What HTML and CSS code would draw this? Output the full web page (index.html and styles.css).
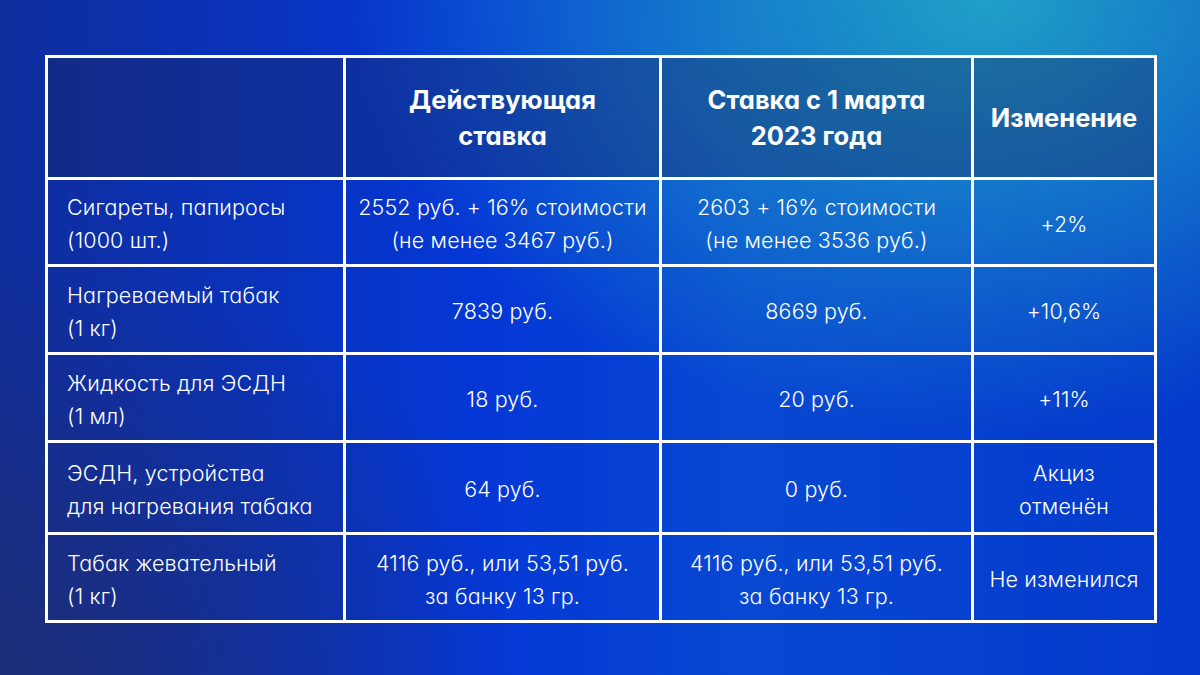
FILE: index.html
```html
<!DOCTYPE html>
<html lang="ru">
<head>
<meta charset="utf-8">
<link rel="stylesheet" href="styles.css">
</head>
<body>
<div class="page">
  <table class="rates">
    <colgroup>
      <col class="c1"><col class="c2"><col class="c3"><col class="c4">
    </colgroup>
    <thead>
      <tr class="head">
        <th class="first"></th>
        <th>Действующая<br>ставка</th>
        <th>Ставка с 1 марта<br>2023 года</th>
        <th>Изменение</th>
      </tr>
    </thead>
    <tbody>
      <tr class="r1">
        <td class="first">Сигареты, папиросы<br>(1000 шт.)</td>
        <td>2552 руб. + 16% стоимости<br>(не менее 3467 руб.)</td>
        <td>2603 + 16% стоимости<br>(не менее 3536 руб.)</td>
        <td>+2%</td>
      </tr>
      <tr class="r2">
        <td class="first">Нагреваемый табак<br>(1 кг)</td>
        <td>7839 руб.</td>
        <td>8669 руб.</td>
        <td>+10,6%</td>
      </tr>
      <tr class="r3">
        <td class="first">Жидкость для ЭСДН<br>(1 мл)</td>
        <td>18 руб.</td>
        <td>20 руб.</td>
        <td>+11%</td>
      </tr>
      <tr class="r4">
        <td class="first">ЭСДН, устройства<br>для нагревания табака</td>
        <td>64 руб.</td>
        <td>0 руб.</td>
        <td>Акциз<br>отменён</td>
      </tr>
      <tr class="r5">
        <td class="first">Табак жевательный<br>(1 кг)</td>
        <td>4116 руб., или 53,51 руб.<br>за банку 13 гр.</td>
        <td>4116 руб., или 53,51 руб.<br>за банку 13 гр.</td>
        <td>Не изменился</td>
      </tr>
    </tbody>
  </table>
</div>
</body>
</html>
```

FILE: styles.css
```css
html, body {
  margin: 0;
  padding: 0;
}
body {
  width: 1200px;
  height: 675px;
  overflow: hidden;
  font-family: Inter, "Noto Sans", sans-serif;
  font-feature-settings: "cv11";
  color: #ffffff;
  background:
    radial-gradient(ellipse 640px 430px at 82% 0%, rgba(32, 165, 198, 0.95), rgba(32, 165, 198, 0) 100%),
    radial-gradient(ellipse 520px 430px at 0% 100%, rgba(30, 45, 115, 0.9), rgba(30, 45, 115, 0) 100%),
    linear-gradient(90deg, #0f2d9c 0%, #0437d6 40%, #0848d2 62%, #0439cc 100%);
}
.page {
  padding: 55px 0 0 45px;
}
.rates {
  border-collapse: collapse;
  table-layout: fixed;
  width: 1109px;
  border: 3px solid #ffffff;
}
.c1 { width: 298px; }
.c2 { width: 316px; }
.c3 { width: 312px; }
.c4 { width: 183px; }

.rates th, .rates td {
  border: 3px solid #ffffff;
  padding: 0;
  text-align: center;
  vertical-align: middle;
}
.rates th {
  font-weight: 700;
  font-size: 25.5px;
  line-height: 36px;
  height: 119px;
  background: rgba(28, 38, 90, 0.36);
}
.rates td {
  font-weight: 300;
  font-size: 21.5px;
  line-height: 33px;
  letter-spacing: 0.15px;
  padding-top: 4px;
}
.rates td.first {
  text-align: left;
  padding-left: 19px;
}
.r1 td { height: 80px; }
.r2 td { height: 81px; }
.r3 td { height: 81px; }
.r4 td { height: 85px; }
.r5 td { height: 81px; }
```
